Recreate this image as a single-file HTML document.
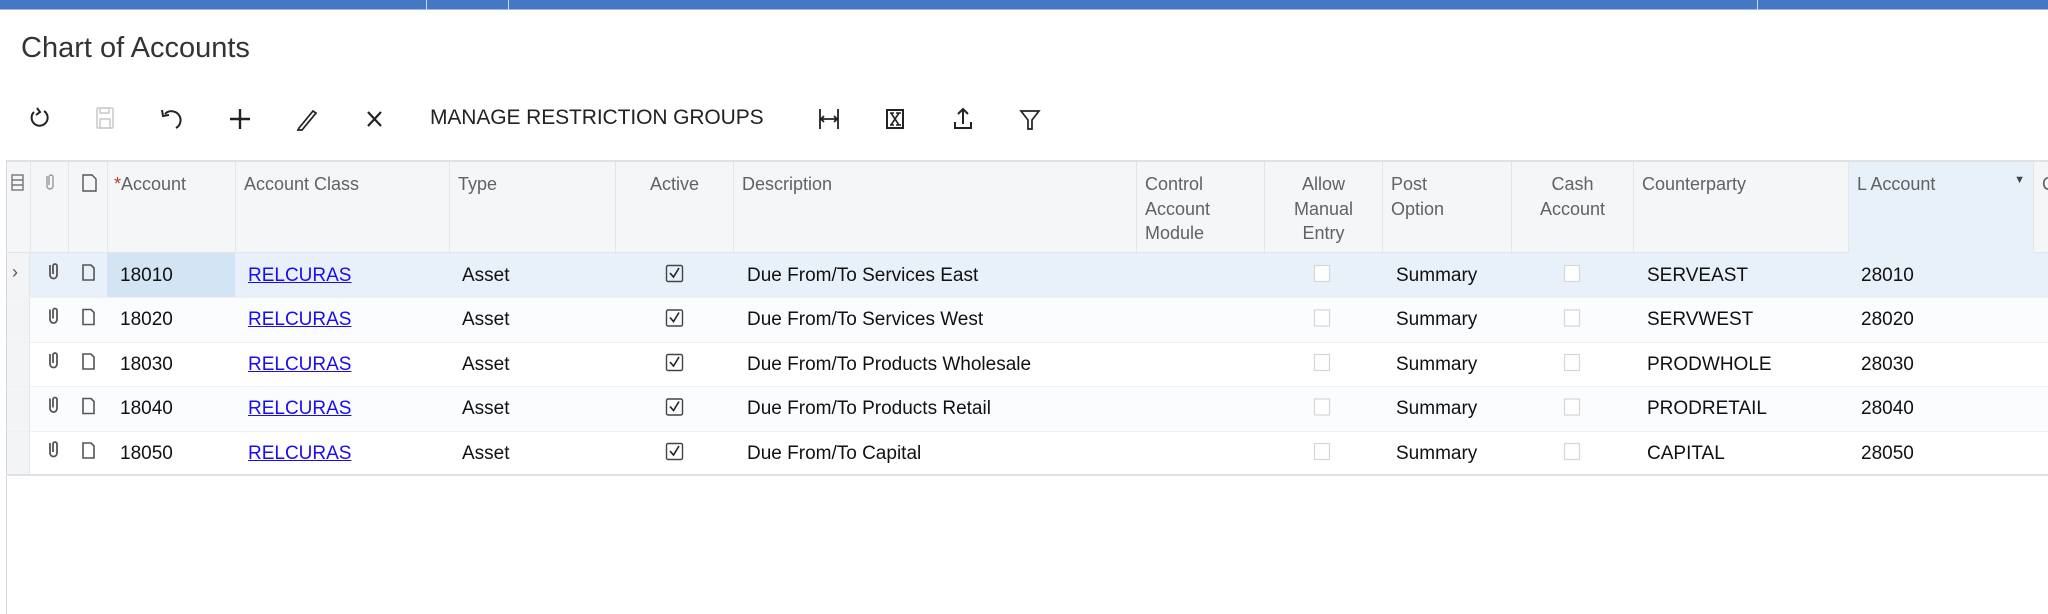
<!DOCTYPE html>
<html><head><meta charset="utf-8"><style>
*{margin:0;padding:0;box-sizing:border-box}
body{width:2048px;height:614px;overflow:hidden;background:#fff;font-family:"Liberation Sans",Arial,sans-serif;position:relative}
.a{position:absolute}
.top{left:0;top:0;width:2048px;height:10px;background:#4478c4;border-bottom:1px solid #9db8e0}
.vd{top:0;width:1px;height:10px;background:#c9d8ef}
.title{left:21px;top:32px;font-size:29px;color:#333}
.mtext{left:430px;top:106px;font-size:21px;color:#222;line-height:24px;letter-spacing:-0.1px}
.hdr{top:160px;height:93px;background:#f5f6f8;border-top:2px solid #e0e2e6;border-bottom:1px solid #e3e5e8}
.hc{position:absolute;top:0;height:91px;border-left:1px solid #e4e6e9;font-size:18px;color:#606266;line-height:24.5px;padding:10px 8px}
.c{position:absolute;font-size:19px;color:#111;line-height:44px}
.lnk{color:#1a0dee;text-decoration:underline}
</style></head><body>
<div class="a top"></div>
<div class="a vd" style="left:426px"></div>
<div class="a vd" style="left:508px"></div>
<div class="a vd" style="left:1757px"></div>
<div class="a title">Chart of Accounts</div>

<svg class="a" style="left:0;top:100px" width="1060" height="36" viewBox="0 0 1060 36" fill="none" stroke="#222" stroke-width="2">
<path d="M44 11 A8 8 0 1 1 34 12" /><path d="M37 8 L40 12 L36 15" />
<g stroke="#ccc" stroke-width="1.6"><rect x="97" y="8" width="16" height="20" rx="1"/><rect x="100" y="8" width="9" height="5"/><rect x="100" y="19" width="10" height="9"/></g>
<path d="M165 14 A9 9 0 1 1 176 28" /><path d="M162 10 L163 16 L169 15"/>
<path d="M240 9 V29 M230 19 H250" stroke-width="2.4"/>
<path d="M299 28 L313 11 L316 13 L302 30 L298 30 Z" stroke-width="1.7"/>
<path d="M368 12 L381 26 M381 12 L368 26" stroke-width="2.2"/>
<path d="M820 9 V29 M838 9 V29 M822 19 H836 M824 16 L821 19 L824 22 M834 16 L837 19 L834 22" stroke-width="1.8"/>
<rect x="887" y="10" width="16" height="18" stroke-width="2"/><path d="M891 13 L899 25 M899 13 L891 25 M890 13 H894 M896 13 H901 M890 25 H894 M896 25 H901" stroke-width="1.6"/>
<path d="M963 9 V24 M958 14 L963 9 L968 14 M955 22 V28 H971 V22" stroke-width="2"/>
<path d="M1021 11 H1039 L1032 20 V29 H1028 V20 Z" stroke-width="1.7"/>
</svg>
<div class="a mtext">MANAGE RESTRICTION GROUPS</div>

<!-- grid -->
<div class="a" style="left:6px;top:160px;width:1px;height:454px;background:#d6d8dc"></div>
<div class="a" style="left:7px;top:253px;width:23px;height:222px;background:#f3f4f6;border-right:1px solid #e4e6e9"></div>
<div class="a hdr" style="left:7px;width:2041px"></div>
<div class="a" style="left:7px;top:162px;width:2041px;height:91px">
 <div class="hc" style="left:0;width:24px;border-left:none"></div>
 <div class="hc" style="left:23px;width:38px"></div>
 <div class="hc" style="left:61px;width:39px"></div>
 <div class="hc" style="left:100px;width:128px;padding-left:6px"><span style="color:#c0392b">*</span>Account</div>
 <div class="hc" style="left:228px;width:214px">Account Class</div>
 <div class="hc" style="left:442px;width:166px">Type</div>
 <div class="hc" style="left:608px;width:118px;text-align:center">Active</div>
 <div class="hc" style="left:726px;width:409px">Description</div>
 <div class="hc" style="left:1129px;width:128px">Control<br>Account<br>Module</div>
 <div class="hc" style="left:1257px;width:118px;text-align:center">Allow<br>Manual<br>Entry</div>
 <div class="hc" style="left:1375px;width:129px">Post<br>Option</div>
 <div class="hc" style="left:1504px;width:122px;text-align:center">Cash<br>Account</div>
 <div class="hc" style="left:1626px;width:215px">Counterparty</div>
 <div class="hc" style="left:1841px;width:185px;background:#e8f0fa;height:92px">L Account<span style="position:absolute;right:8px;top:6px;font-size:11px;color:#444">&#9660;</span></div>
 <div class="hc" style="left:2026px;width:30px">C</div>
</div>
<svg class="a" style="left:8px;top:172px" width="100" height="24" fill="none" stroke="#777" stroke-width="1.4">
<rect x="4" y="3" width="11" height="15"/><path d="M4 8H15M4 13H15"/>
<path d="M39 4 V14 A3 3 0 0 0 45 14 V5 A2 2 0 0 0 41 5 V13" stroke="#999"/>
<path d="M75 3 H84 L88 7 V19 H75 Z" stroke="#555"/>
</svg>

<!-- rows -->
<div class="a" style="left:30px;top:253px;width:2018px;height:44px;background:#e8f0fa"></div>
<div class="a" style="left:107px;top:253px;width:128px;height:44px;background:#d3e4f4"></div>
<div class="a" style="left:30px;top:297px;width:2018px;height:45px;background:#fafcfe"></div>
<div class="a" style="left:30px;top:386px;width:2018px;height:45px;background:#fafcfe"></div>
<div class="a" style="left:7px;top:297px;width:2041px;height:1px;background:#edf0f4"></div>
<div class="a" style="left:7px;top:342px;width:2041px;height:1px;background:#edf0f4"></div>
<div class="a" style="left:7px;top:386px;width:2041px;height:1px;background:#edf0f4"></div>
<div class="a" style="left:7px;top:431px;width:2041px;height:1px;background:#edf0f4"></div>
<div class="a" style="left:6px;top:474px;width:2042px;height:2px;background:#e0e2e6"></div>
<div class="a" style="left:12px;top:262px;font-size:18px;color:#555">&#8250;</div>

<svg class="a" style="left:40px;top:253px" width="60" height="222" fill="none" stroke-width="1.8">
<g id="ic" stroke="#555"><path d="M10 12 V22 A3.5 3.5 0 0 0 17 22 V13 A2 2 0 0 0 13 13 V21"/><path d="M43 12 H51 L54 15 V27 H43 Z" stroke-width="1.6"/></g>
<use href="#ic" y="44.5"/><use href="#ic" y="89"/><use href="#ic" y="133.5"/><use href="#ic" y="178"/>
</svg>

<div class="a" style="left:0;top:254px;width:2048px;height:44px">
<div class="c" style="left:120px">18010</div><div class="c lnk" style="left:248px">RELCURAS</div><div class="c" style="left:462px">Asset</div>
<div class="c" style="left:747px">Due From/To Services East</div><div class="c" style="left:1396px">Summary</div><div class="c" style="left:1647px">SERVEAST</div><div class="c" style="left:1861px">28010</div>
</div>
<div class="a" style="left:0;top:298px;width:2048px;height:44px">
<div class="c" style="left:120px">18020</div><div class="c lnk" style="left:248px">RELCURAS</div><div class="c" style="left:462px">Asset</div>
<div class="c" style="left:747px">Due From/To Services West</div><div class="c" style="left:1396px">Summary</div><div class="c" style="left:1647px">SERVWEST</div><div class="c" style="left:1861px">28020</div>
</div>
<div class="a" style="left:0;top:343px;width:2048px;height:44px">
<div class="c" style="left:120px">18030</div><div class="c lnk" style="left:248px">RELCURAS</div><div class="c" style="left:462px">Asset</div>
<div class="c" style="left:747px">Due From/To Products Wholesale</div><div class="c" style="left:1396px">Summary</div><div class="c" style="left:1647px">PRODWHOLE</div><div class="c" style="left:1861px">28030</div>
</div>
<div class="a" style="left:0;top:387px;width:2048px;height:44px">
<div class="c" style="left:120px">18040</div><div class="c lnk" style="left:248px">RELCURAS</div><div class="c" style="left:462px">Asset</div>
<div class="c" style="left:747px">Due From/To Products Retail</div><div class="c" style="left:1396px">Summary</div><div class="c" style="left:1647px">PRODRETAIL</div><div class="c" style="left:1861px">28040</div>
</div>
<div class="a" style="left:0;top:432px;width:2048px;height:44px">
<div class="c" style="left:120px">18050</div><div class="c lnk" style="left:248px">RELCURAS</div><div class="c" style="left:462px">Asset</div>
<div class="c" style="left:747px">Due From/To Capital</div><div class="c" style="left:1396px">Summary</div><div class="c" style="left:1647px">CAPITAL</div><div class="c" style="left:1861px">28050</div>
</div>

<svg class="a" style="left:660px;top:253px" width="930" height="222" fill="none">
<g id="r">
<rect x="6.5" y="12.5" width="16" height="16" rx="1.5" stroke="#444" stroke-width="1.4"/><path d="M10 20 L13.5 24 L19 15" stroke="#222" stroke-width="1.6"/>
<rect x="654.5" y="12.5" width="15" height="16" stroke="#d4d6da" stroke-width="1.2" fill="#fff"/>
<rect x="904.5" y="12.5" width="15" height="16" stroke="#d4d6da" stroke-width="1.2" fill="#fff"/>
</g>
<use href="#r" y="44.5"/><use href="#r" y="89"/><use href="#r" y="133.5"/><use href="#r" y="178"/>
</svg>
</body></html>
